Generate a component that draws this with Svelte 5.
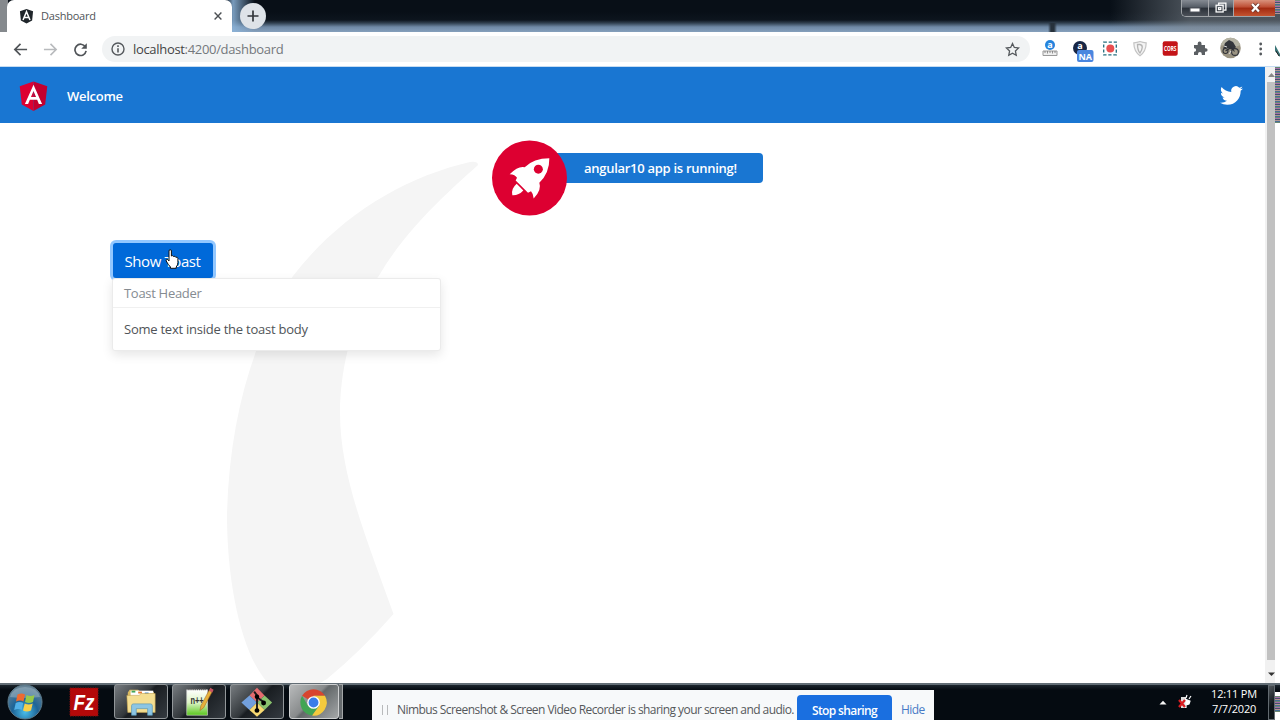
<script lang="ts">
    const url = { host: "localhost", rest: ":4200/dashboard" };
    const sharing = "Nimbus Screenshot & Screen Video Recorder is sharing your screen and audio.";

    let toastOpen: boolean = $state(true);

    function showToast() {
        toastOpen = true;
    }
</script>

<div class="screen">
  <div class="titlebar">
    <div class="tab">
      <svg class="favicon" viewBox="0 0 16 16">
        <path d="M8 0.5 15 3 14 12.8 8 16 2 12.8 1 3z" fill="#20262b" />
        <path d="M4.3 12.2 8 3.3l3.7 8.9M5.7 9.6h4.6" fill="none" stroke="#fff" stroke-width="1.6" />
      </svg>
      <span class="tab-title">Dashboard</span>
      <svg class="tab-close" viewBox="0 0 8 8"><path d="M.6.6l6.8 6.8M7.4.6.6 7.4" stroke="#4c5054" stroke-width="1.4" /></svg>
    </div>
    <button class="new-tab" aria-label="New tab">
      <svg viewBox="0 0 26 26"><path d="M13 7.5v11M7.5 13h11" stroke="#33373b" stroke-width="1.7" /></svg>
    </button>
    <div class="win-controls">
      <div class="win-btn"><svg viewBox="0 0 26 16"><rect x="8" y="8" width="10" height="4" fill="#fff" stroke="#50555c" /></svg></div>
      <div class="win-btn"><svg viewBox="0 0 26 16"><g fill="none" stroke="#fff" stroke-width="1.4"><path d="M10.5 5V2.7h7.8v7.6H16" /><rect x="7.7" y="5" width="7.6" height="7.3" /><rect x="10.3" y="7.7" width="2.5" height="2" /></g></svg></div>
      <div class="win-btn close"><svg viewBox="0 0 42 16"><path d="M18.5 4l7 7.500M25.5 4l-7 7.500" stroke="#6e392f" stroke-width="4" /><path d="M18.5 4l7 7.500M25.5 4l-7 7.500" stroke="#fff" stroke-width="2.3" /></svg></div>
    </div>
    <div class="edge noise"></div>
  </div>

  <div class="toolbar">
    <svg class="nav" viewBox="0 0 16 16"><path d="M15 8H2M8 2 2 8l6 6" fill="none" stroke="#505458" stroke-width="1.8" /></svg>
    <svg class="nav" viewBox="0 0 16 16"><path d="M1 8h13M8 2l6 6-6 6" fill="none" stroke="#b8babd" stroke-width="1.7" /></svg>
    <svg class="nav" viewBox="0 0 16 16"><path d="M13.2 5.2A6 6 0 1 0 14 9.5" fill="none" stroke="#505458" stroke-width="1.8" /><path d="M14.7 1.2v6H8.8z" fill="#505458" /></svg>
    <div class="omnibox">
      <svg class="info" viewBox="0 0 14 14"><circle cx="7" cy="7" r="6" fill="none" stroke="#55595d" stroke-width="1.4" /><path d="M7 6.2v4.3M7 3.3v1.6" stroke="#55595d" stroke-width="1.6" /></svg>
      <span class="url"><b>{url.host}</b>{url.rest}</span>
      <svg class="star" viewBox="0 0 14 14"><path d="M7 1.4l1.7 3.700 4 .5-3 2.800.8 4L7 10.400l-3.500 2 .8-4-3-2.800 4-.5z" fill="none" stroke="#55595d" stroke-width="1.2" /></svg>
    </div>
    <div class="extensions">
      <svg viewBox="0 0 30 34">
        <circle cx="15" cy="13" r="5" fill="#2584dd" />
        <text x="15" y="16" class="tiny">a</text>
        <path d="M8 19v4.500h14V19z" fill="#eee" stroke="#999" stroke-width="1" />
        <path d="M10 19v2M12.500 19v2.500M15 19v2M17.500 19v2.500M20 19v2" stroke="#777" stroke-width=".8" />
      </svg>
      <svg viewBox="0 0 30 34">
        <circle cx="15" cy="16" r="7" fill="#172645" />
        <text x="15" y="17" class="tiny">a</text>
        <rect x="12" y="18" width="16.500" height="12" rx="2" fill="#4a86df" />
        <text x="20.200" y="28" class="na">NA</text>
      </svg>
      <svg viewBox="0 0 30 34">
        <rect x="8.700" y="10.200" width="12.600" height="12.600" fill="none" stroke="#246d7d" stroke-width="1.3" stroke-dasharray="3.2 1.8" />
        <circle cx="15.300" cy="16.500" r="4" fill="#e94f50" />
      </svg>
      <svg viewBox="0 0 30 34">
        <path d="M8.800 10.800Q12 10.600 15 9.500q3 1.100 6.200 1.300-.1 8.700-6.200 13-6.100-4.300-6.200-13z" fill="#f4f4f4" stroke="#c4c4c4" stroke-width="1.2" />
        <path d="M12.500 12.500h2.500q4.500 1 0 8.500-2.500-2.500-2.500-8.500z" fill="none" stroke="#b4b4b4" stroke-width="1.3" />
      </svg>
      <svg viewBox="0 0 30 34">
        <rect x="7.700" y="9.300" width="15" height="14.500" rx="2" fill="#c41418" />
        <text x="15.200" y="19" class="cors" textLength="12.500" lengthAdjust="spacingAndGlyphs">CORS</text>
      </svg>
      <svg viewBox="0 0 30 34">
        <path d="M9 13h3.700v-1.500a1.900 1.900 0 0 1 3.800 0V13H20v3.200h.8a1.800 1.800 0 0 1 0 3.600H20V23h-3.200v-1a1.900 1.900 0 0 0-3.800 0v1H9v-3.300h.7a1.800 1.800 0 0 0 0-3.500H9z" fill="#5b5f63" />
      </svg>
      <svg viewBox="0 0 30 34">
        <circle cx="15.500" cy="16" r="10.300" fill="#9b9482" />
        <path d="M5.600 13.500a10.300 10.300 0 0 1 19.800-.4l-5 2-8-2z" fill="#b5b3a4" />
        <path d="M10 11l4-3 4 2 3 5-3 3-6-2-4 1z" fill="#34363b" />
        <g fill="none" stroke="#303238" stroke-width="1.100"><circle cx="10.500" cy="19" r="2.500" /><circle cx="20" cy="20" r="3.400" /><path d="M15 14l4.500 5.500M10.500 19l5-3" /></g>
        <path d="M14 22l2-3M9 14l3 1" stroke="#ddd" />
      </svg>
      <svg viewBox="0 0 30 34"><g fill="#55595d"><circle cx="15.700" cy="12" r="1.400" /><circle cx="15.700" cy="17" r="1.400" /><circle cx="15.700" cy="22" r="1.400" /></g></svg>
    </div>
    <svg class="clip" viewBox="0 0 5 34"><path d="M0 13l5 9v3L0 19z" fill="#397477" /><path d="M1 19l3 5" stroke="#222" /></svg>
  </div>

  <div class="viewport">
    <div class="page">
      <header>
        <svg class="logo" viewBox="0 0 250 250">
          <path d="M125 30 31.900 63.200l14.200 123.100L125 230z" fill="#dd0031" />
          <path d="M125 30v200l78.900-43.700L218.100 63.200z" fill="#c3002f" />
          <path d="M125 52.100 66.800 182.600h21.700l11.700-29.200h49.400l11.700 29.200H183zm17 83.300h-34l17-40.900z" fill="#fff" />
        </svg>
        <span class="welcome">Welcome</span>
        <svg class="twitter" viewBox="0 0 24 24">
          <path fill="#fff" d="M23.950 4.570a10 10 0 0 1-2.820.77 4.960 4.960 0 0 0 2.160-2.720c-.95.550-2 .950-3.130 1.190a4.920 4.920 0 0 0-8.380 4.480C7.690 8.090 4.070 6.130 1.640 3.160a4.820 4.820 0 0 0-.670 2.480c0 1.710.870 3.210 2.190 4.100a4.900 4.900 0 0 1-2.230-.620v.06a4.920 4.920 0 0 0 3.950 4.830 5 5 0 0 1-2.210.080 4.940 4.940 0 0 0 4.600 3.420A9.870 9.870 0 0 1 0 19.540a13.990 13.990 0 0 0 7.550 2.210c9.050 0 13.990-7.500 13.990-13.990 0-.210 0-.420-.010-.630a9.940 9.940 0 0 0 2.460-2.550z" />
        </svg>
      </header>

      <main>
        <svg class="swoosh" viewBox="0 123 1265 560">
          <path fill="#f5f5f5" d="M470 162Q478 161 478 165C462 180 410 223 380 274C358 305 340 360 340 413C340 477 368 542 393.500 614Q361 651 327 679L320 683H268C242 655 227 585 227 515C229 423 252 339 293 276C340 215 405 177 470 162z" />
        </svg>

        <div class="card">
          <svg class="rocket" viewBox="38 30 225 227">
            <circle cx="150.500" cy="143.500" r="112.500" fill="#dd0031" />
            <path fill="#fff" d="M210 84Q163 84 136 111Q117 106 91 132Q108 133 113 143L109 151L146 188L155 183Q162 190 163 205Q188 180 180 158Q211 127 210 84z" />
            <path fill="#fff" d="M112 161Q94 177 99 195Q118 196 132 181z" />
            <circle cx="177" cy="117" r="13.500" fill="#dd0031" />
          </svg>
          <span class="running">angular10 app is running!</span>
        </div>

        <div class="demo">
          <button class="btn" onclick={showToast}>Show Toast</button>
          {#if toastOpen}
            <div class="toast">
              <div class="toast-header">Toast Header</div>
              <div class="toast-body">Some text inside the toast body</div>
            </div>
          {/if}
        </div>

        <svg class="cursor" viewBox="0 0 14 20">
          <path d="M4 11V2q0-1.300 1.200-1.300T6.400 2v5q1.600-1 2.100.500 1.700-.8 2.200.700 2-.4 2.200 1.300v4q0 2.500-1.700 4.500v1.300H5.500v-1.300Q3 15.500 1.200 12q-.5-1.300.5-1.700T4 12z" fill="#fff" stroke="#111" />
        </svg>
      </main>
    </div>
    <div class="scrollbar">
      <svg viewBox="0 0 10 15"><path d="M3 10h7L6.500 6z" fill="#888" /></svg>
      <div class="thumb"></div>
      <svg viewBox="0 0 10 23"><path d="M3 12.500h7L6.500 16z" fill="#333" /></svg>
    </div>
    <div class="edge"><div class="noise"></div></div>
  </div>

  <div class="taskbar">
    <svg class="orb" viewBox="0 0 36 36">
      <defs>
        <radialGradient id="orb" cx=".5" cy=".8" r=".75"><stop offset="0" stop-color="#49bde9" /><stop offset=".5" stop-color="#1d6497" /><stop offset="1" stop-color="#668295" /></radialGradient>
      </defs>
      <circle cx="18" cy="18" r="17" fill="url(#orb)" stroke="#5d7c8c" />
      <path d="M3 13Q6 3 18 3t15 10Q18 15 3 13z" fill="#b7cad4" opacity=".4" />
      <path d="M10.500 10.500q4-2 7.500 0l-1.500 7q-3.500-2-7.500 0z" fill="#ed6a31" />
      <path d="M19.500 11q4 2 8 0L26 18q-4 2-8 0z" fill="#97c94a" />
      <path d="M8.700 19q4-2 7.500 0l-1.500 7q-3.500-2-7.500 0z" fill="#52b1e8" />
      <path d="M17.700 19.500q4 2 8 0L24 26.500q-4 2-8 0z" fill="#f8cf48" />
    </svg>
    <svg class="filezilla" viewBox="0 0 30 30">
      <rect x="1" y="1" width="28" height="28" fill="#b40909" stroke="#801010" stroke-dasharray="1.500 1" />
      <text x="4.500" y="23" class="fz" textLength="21" lengthAdjust="spacingAndGlyphs">Fz</text>
    </svg>
    <div class="tasks">
      <div class="task">
        <svg viewBox="0 0 54 36">
          <path d="M13 8l2-3h9l2 2h13q2 0 2 2v18H13z" fill="#d9b960" />
          <path d="M16 6h24v10H16z" fill="#fff" /><path d="M17 6h4v2h-4z" fill="#41a55a" /><path d="M31 8h4v2h-4z" fill="#3880c5" /><path d="M24 7h4v2h-4z" fill="#e67a33" />
          <path d="M12 11h13l2-2h15v20H13z" fill="#f4de91" stroke="#bf9e4c" stroke-width=".6" />
          <path d="M17 32V22q0-2 2-2h18q2 0 2 2v10h-5v-7H22v7z" fill="#8cc6e4" stroke="#5595b6" stroke-width=".7" />
        </svg>
      </div>
      <div class="task">
        <svg viewBox="0 0 54 36">
          <defs><linearGradient id="note" x2="0" y2="1"><stop offset="0" stop-color="#fff" /><stop offset=".5" stop-color="#ddf4c6" /><stop offset="1" stop-color="#58c61c" /></linearGradient></defs>
          <path d="M14 5h22v27H14z" fill="url(#note)" stroke="#ddd" stroke-width=".6" /><path d="M15 4.500h20" stroke="#555" stroke-width="2" stroke-dasharray="1 1" />
          <text x="18" y="20" class="notepad" textLength="14" lengthAdjust="spacingAndGlyphs">n++</text>
          <path d="M28 27l1-5L38 5l3 2-9 17z" fill="#e6b13b" stroke="#a86825" stroke-width=".6" /><path d="M37.500 6l1.500-3 3.500 2-1.500 3z" fill="#c65563" />
        </svg>
      </div>
      <div class="task">
        <svg viewBox="0 0 54 36">
          <path d="M27 3l8 8-8 7.500L19 11z" fill="#e46b6e" /><path d="M19 11l8 7.500-8 8-8.500-8z" fill="#729fdc" /><path d="M35 11l8 7.500-8 8-8-8z" fill="#89c26e" /><path d="M27 18.500l8 8-8 7-8-7z" fill="#f7d971" />
          <path d="M24 7l3 4v17M27 13l7 5" fill="none" stroke="#181818" stroke-width="2" /><circle cx="27" cy="12.500" r="2.400" /><circle cx="34" cy="19" r="2.600" /><circle cx="27" cy="27" r="2.500" />
        </svg>
      </div>
      <div class="task active">
        <svg viewBox="0 0 49 36">
          <path d="M24 18.500 11.900 11.500A14 14 0 0 1 36.100 11.500H24z" fill="#d8452f" />
          <path d="M11.900 11.500A14 14 0 0 0 22.500 32.400l7.600-10.400L18 22z" fill="#42a554" />
          <path d="M36.100 11.500H24l6 10.500-7.500 10.400A14 14 0 0 0 36.100 11.500z" fill="#f4ca3d" />
          <circle cx="24" cy="18.500" r="6.700" fill="#fff" /><circle cx="24" cy="18.500" r="5.200" fill="#397de8" />
        </svg>
      </div>
      <div class="stack"></div>
    </div>
    <div class="share">
      <span class="grip"></span>
      <span class="share-text">{sharing}</span>
      <button class="stop">Stop sharing</button>
      <span class="hide">Hide</span>
    </div>
    <div class="tray">
      <svg class="up" viewBox="0 0 8 5"><path d="M.5 4.500 4 .8l3.500 3.700z" fill="#f5f5f5" /></svg>
      <svg class="plug" viewBox="0 0 14 16"><path d="M3 3h5v11H3z" fill="#ddd" /><path d="M8 4l1-3M11 5l2-3M7 5l5 2-1 3-3 1v3" fill="#fff" stroke="#fff" stroke-width="1.200" /><path d="M1 6l6 7M7 6l-6 7" stroke="#d91c20" stroke-width="2.300" /></svg>
      <div class="clock"><span>12:11 PM</span><span>7/7/2020</span></div>
      <div class="peek"></div>
      <div class="edge"><div class="noise"></div></div>
    </div>
  </div>
</div>

<style>
    :global(body) {
        margin: 0;
        overflow: hidden;
    }

    .screen {
        width: 1280px;
        height: 720px;
        display: flex;
        flex-direction: column;
        overflow: hidden;
        background: #fff;
        font-family: "Open Sans", "Noto Sans", sans-serif;
    }

    svg {
        display: block;
        flex: none;
    }

    button {
        border: 0;
        padding: 0;
        font-family: inherit;
    }

    .edge {
        width: 5px;
        flex: none;
        background: #fff;
    }

    .noise {
        background: repeating-linear-gradient(#6a8872 0 1px, #a66eaa 1px 2px, #46506c 2px 3px, #b39591 3px 4px, #466d95 4px 5px);
    }

    /* browser window */
    .titlebar {
        height: 32px;
        display: flex;
        box-sizing: border-box;
        padding-left: 7px;
        background:
            linear-gradient(90deg, #85898d 0 8px, transparent 8px),
            linear-gradient(90deg, transparent 225px, rgba(140, 180, 218, .85) 233px, transparent 255px),
            linear-gradient(90deg, transparent 1048px, #26313b 1051px 1054px, transparent 1057px) 0 23px no-repeat,
            linear-gradient(90deg, transparent 1110px, rgba(130, 138, 146, .55) 1190px),
            linear-gradient(#080f17 0 12px, #0d151e 20px, #30404f 23px, #708aa6 27px, #86a0bc 32px);
    }

    .titlebar > .edge {
        height: 14px;
    }

    .tab {
        width: 225px;
        height: 32px;
        box-sizing: border-box;
        padding: 0 10px 0 12px;
        display: flex;
        align-items: center;
        background: #fff;
        border-radius: 7px 7px 0 0;
    }

    .favicon {
        width: 15px;
        height: 16px;
    }

    .tab-title {
        margin: -2px 0 0 7px;
        flex: 1;
        font-size: 11px;
        letter-spacing: -.22px;
        color: #505458;
    }

    .tab-close {
        width: 8px;
        height: 8px;
    }

    .new-tab {
        width: 26px;
        height: 26px;
        margin: 3px 0 0 8px;
        border-radius: 50%;
        background: #dee3e8;
    }

    .win-controls {
        display: flex;
        height: 16px;
        margin-left: auto;
        border: 1px solid #a0a4a8;
        border-top: 0;
        border-right: 0;
        border-radius: 0 0 0 5px;
        overflow: hidden;
    }

    .win-btn {
        width: 26px;
        border-right: 1px solid #a4a6aa;
        background: linear-gradient(#858b93, #555c65 45%, #292f37 50%, #4b5058);
    }

    .win-btn:nth-child(2) {
        width: 24px;
    }

    .win-btn.close {
        width: 41px;
        border: 0;
        background: linear-gradient(#d9927c, #bd4c32 45%, #a12910 50%, #c45330);
    }

    .win-btn svg {
        height: 16px;
        width: 100%;
    }

    .toolbar {
        height: 35px;
        display: flex;
        align-items: center;
        box-sizing: border-box;
        padding-left: 13px;
        border-bottom: 1px solid #c5dcf2;
        background: #fff;
    }

    .nav {
        width: 15px;
        height: 15px;
        margin-right: 15px;
    }

    .omnibox {
        width: 928px;
        height: 26px;
        margin-left: -1px;
        box-sizing: border-box;
        padding: 0 10px 0 9px;
        display: flex;
        align-items: center;
        border-radius: 13px;
        background: #f1f3f4;
    }

    .info {
        width: 14px;
        height: 14px;
    }

    .url {
        margin: -1px 0 0 8px;
        flex: 1;
        font-size: 13px;
        letter-spacing: -.32px;
        color: #74787c;
    }

    .url b {
        font-weight: 400;
        color: #444;
    }

    .star {
        width: 15px;
        height: 15px;
    }

    .extensions {
        display: flex;
        margin-left: auto;
    }

    .extensions svg {
        width: 30px;
        height: 34px;
    }

    .clip {
        width: 5px;
        height: 34px;
    }

    .tiny, .na, .cors {
        text-anchor: middle;
        font-size: 9px;
        font-weight: 700;
        fill: #fff;
    }

    .cors {
        font-size: 7px;
    }

    .viewport {
        height: 616px;
        display: flex;
    }

    .page {
        width: 1265px;
        display: flex;
        flex-direction: column;
    }

    header {
        height: 56px;
        box-sizing: border-box;
        padding: 0 22px 0 15px;
        display: flex;
        align-items: center;
        background: #1976d2;
        color: #fff;
    }

    .logo {
        width: 37px;
        height: 37px;
    }

    .welcome {
        margin: 2px 0 0 15px;
        flex: 1;
        font-size: 13px;
        font-weight: 600;
        letter-spacing: -.28px;
    }

    .twitter {
        width: 23px;
        height: 23px;
    }

    main {
        flex: 1;
        position: relative;
        overflow: hidden;
    }

    .swoosh {
        position: absolute;
        left: 0;
        top: 0;
        width: 1265px;
        height: 560px;
    }

    .card {
        position: relative;
        display: flex;
        align-items: flex-start;
        padding: 17px 0 0 492px;
    }

    .rocket {
        width: 75px;
        height: 76px;
        z-index: 1;
    }

    .running {
        width: 233px;
        height: 30px;
        box-sizing: border-box;
        margin: 13px 0 0 -37px;
        padding-left: 54px;
        border-radius: 4px;
        background: #1976d2;
        color: #fff;
        font-size: 13px;
        font-weight: 600;
        letter-spacing: -.28px;
        line-height: 30px;
        white-space: nowrap;
    }

    .demo {
        position: relative;
        width: 328px;
        margin: 27px 0 0 112px;
    }

    .btn {
        display: block;
        width: 100px;
        height: 35px;
        margin-left: .5px;
        border-radius: 3px;
        background: #0069d9;
        box-shadow: 0 0 0 3px rgba(38, 143, 255, .5);
        color: #fff;
        font-size: 15px;
        letter-spacing: -.4px;
    }

    .toast {
        position: relative;
        box-sizing: border-box;
        height: 73px;
        margin-right: -1px;
        border: 1px solid rgba(0, 0, 0, .08);
        border-radius: 3px;
        background: rgba(255, 255, 255, .99);
        box-shadow: 0 4px 11px rgba(0, 0, 0, .1);
        font-size: 13px;
        letter-spacing: -.24px;
    }

    .toast-header {
        height: 29px;
        box-sizing: border-box;
        padding-left: 11px;
        border-bottom: 1px solid #f0f0f0;
        color: #858b91;
        line-height: 28px;
        letter-spacing: -.3px;
    }

    .toast-body {
        padding: 11px;
        color: #505458;
        line-height: 21px;
    }

    .cursor {
        position: absolute;
        left: 165px;
        top: 126px;
        width: 14px;
        height: 20px;
    }

    .scrollbar {
        width: 10px;
        display: flex;
        flex-direction: column;
        background: #f1f1f1;
    }

    .thumb {
        flex: 1;
        margin-left: 2px;
        background: #c1c1c1;
    }

    .viewport .noise {
        height: 56px;
    }

    /* windows taskbar */
    .taskbar {
        height: 37px;
        display: flex;
        align-items: flex-start;
        box-sizing: border-box;
        border-top: 2px solid #626d75;
        background: linear-gradient(#1b252d, #050b11 5px);
    }

    .orb {
        width: 36px;
        height: 36px;
        margin: -1px 0 0 7px;
    }

    .filezilla {
        width: 30px;
        height: 30px;
        margin: 2px 0 0 26px;
    }

    .fz {
        fill: #fff;
        font: italic 700 22px "Liberation Sans", sans-serif;
    }

    .tasks {
        display: flex;
        margin: -1px 0 0 15px;
    }

    .task {
        width: 54px;
        height: 35px;
        box-sizing: border-box;
        margin-right: 4px;
        border: 1px solid #92979a;
        border-radius: 3px;
        background: linear-gradient(135deg, #777c80, #32373b 45%, #191d21 50%, #343a40);
    }

    .task svg {
        width: 100%;
        height: 34px;
    }

    .task.active {
        width: 50px;
        margin: 0 0 0 1px;
        border-color: #ced0d1;
        background: linear-gradient(135deg, #b8babb, #888b8c 45%, #63686a 50%, #a4a7a8);
    }

    .stack {
        width: 4px;
        height: 35px;
        box-sizing: border-box;
        border: 1px solid #a3a6a7;
        border-left: 0;
        background: #666b6e;
    }

    .notepad {
        font: 700 11px "Liberation Sans", sans-serif;
        fill: #333;
    }

    .share {
        width: 562px;
        height: 31px;
        box-sizing: border-box;
        margin: 5px 0 0 29px;
        padding-left: 10px;
        display: flex;
        background: #f7f9fa;
        font-size: 12px;
        line-height: 29px;
        white-space: nowrap;
    }

    .grip {
        width: 2px;
        height: 10px;
        margin: 15px 9px 0 0;
        border: 1px solid #b8babb;
        border-width: 0 1px;
        padding: 0 1px;
    }

    .share-text {
        width: 400px;
        padding-top: 5px;
        color: #55585b;
        letter-spacing: -.56px;
    }

    .stop {
        width: 95px;
        height: 30px;
        margin-top: 5px;
        border-radius: 4px 4px 0 0;
        background: #1a6fe0;
        color: #fff;
        font-size: 12px;
        font-weight: 600;
        line-height: 27px;
        letter-spacing: -.62px;
    }

    .hide {
        margin-left: 9px;
        padding-top: 5px;
        color: #4779c6;
        letter-spacing: -.6px;
    }

    .tray {
        display: flex;
        margin-left: auto;
        height: 35px;
    }

    .up {
        width: 8px;
        height: 5px;
        margin-top: 15px;
    }

    .plug {
        width: 14px;
        height: 16px;
        margin: 9px 0 0 11px;
    }

    .clock {
        width: 76px;
        box-sizing: border-box;
        display: flex;
        flex-direction: column;
        padding: 1px 0 0 8px;
        text-align: center;
        font-size: 11px;
        line-height: 15px;
        letter-spacing: -.2px;
        color: #fff;
    }

    .peek {
        width: 7px;
        box-sizing: border-box;
        border: 1px solid #626a70;
        background: linear-gradient(135deg, #50565b, #0d1419 60%);
    }

    .tray .edge {
        height: 28px;
        margin-top: 7px;
    }

    .tray .noise {
        height: 16px;
        margin-top: 4px;
    }
</style>
